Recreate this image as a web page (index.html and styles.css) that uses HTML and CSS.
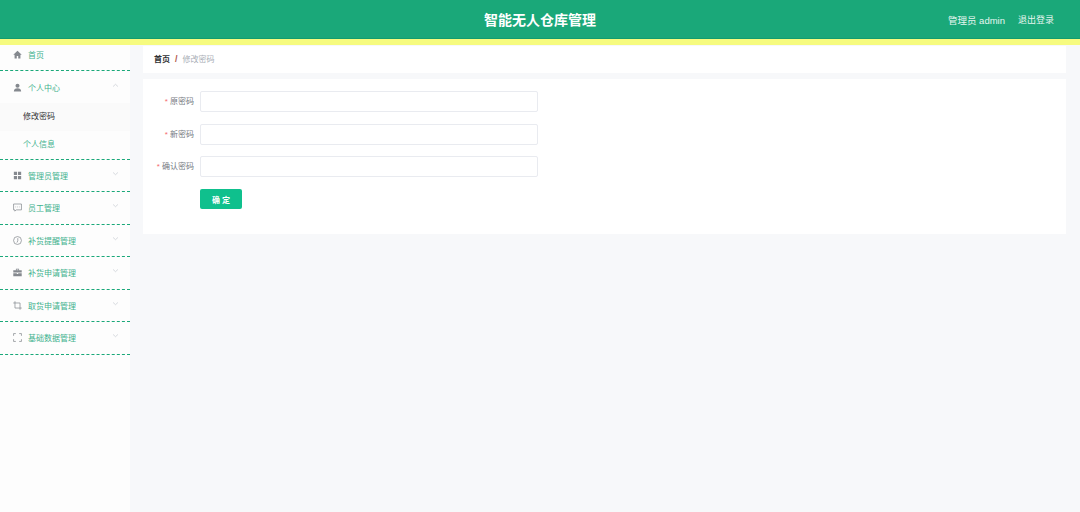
FILE: index.html
```html
<!DOCTYPE html>
<html lang="zh-CN">
<head>
    <meta charset="UTF-8">
    <meta name="viewport" content="width=device-width, initial-scale=1.0">
    <title>智能无人仓库管理</title>
    <link rel="stylesheet" href="styles.css">
</head>
<body>
    <header class="header">
        <h1>智能无人仓库管理</h1>
        <div class="header-right">
            <span>管理员 admin</span>
            <a href="#">退出登录</a>
        </div>
    </header>

    <div class="layout">
        <aside class="sidebar">
            <a href="#" class="menu-item menu-home">
                <svg class="menu-icon" viewBox="0 0 16 16"><path d="M8 1.500 0.500 8.500h2.300V15h3.900v-4.200h2.600V15h3.900V8.500h2.300z"/></svg>
                <span>首页</span>
            </a>

            <div class="menu-group">
                <a href="#" class="menu-item">
                    <svg class="menu-icon" viewBox="0 0 16 16"><circle cx="8" cy="4.800" r="3.600"/><path d="M1.500 15c0-3.800 2.600-5.500 6.500-5.500s6.500 1.700 6.500 5.500z"/></svg>
                    <span>个人中心</span>
                    <svg class="menu-arrow" viewBox="0 0 10 10"><path d="M1.500 6.500 5 3.300l3.500 3.200"/></svg>
                </a>
                <a href="#" class="submenu-item active">修改密码</a>
                <a href="#" class="submenu-item">个人信息</a>
            </div>

            <a href="#" class="menu-item">
                <svg class="menu-icon" viewBox="0 0 16 16"><path d="M1.500 1.500h5.700v5.700H1.500zM8.800 1.500h5.700v5.700H8.800zM1.500 8.800h5.700v5.700H1.500zM8.800 8.800h5.700v5.700H8.800z"/></svg>
                <span>管理员管理</span>
                <svg class="menu-arrow" viewBox="0 0 10 10"><path d="M1.500 3.500 5 6.700l3.500-3.200"/></svg>
            </a>
            <a href="#" class="menu-item">
                <svg class="menu-icon icon-line" viewBox="0 0 16 16"><path d="M1 1.800h14v10.400H6l-2.800 2.200v-2.200H1zM4.500 7h1M7.500 7h1M10.500 7h1"/></svg>
                <span>员工管理</span>
                <svg class="menu-arrow" viewBox="0 0 10 10"><path d="M1.500 3.500 5 6.700l3.500-3.200"/></svg>
            </a>
            <a href="#" class="menu-item">
                <svg class="menu-icon icon-line" viewBox="0 0 16 16"><circle cx="8" cy="8" r="7"/><path d="M8.500 3.800v4.700l-1.500 3.200"/></svg>
                <span>补货提醒管理</span>
                <svg class="menu-arrow" viewBox="0 0 10 10"><path d="M1.500 3.500 5 6.700l3.500-3.200"/></svg>
            </a>
            <a href="#" class="menu-item">
                <svg class="menu-icon" viewBox="0 0 16 16"><path d="M5.200 1.500h5.600v2.700H15.500v4H.5v-4h4.700zm1.200 1.200v1.500h3.200V2.700zM.5 9.200h6.300v1.500h2.400V9.200h6.300v5.300H.5z"/></svg>
                <span>补货申请管理</span>
                <svg class="menu-arrow" viewBox="0 0 10 10"><path d="M1.500 3.500 5 6.700l3.500-3.200"/></svg>
            </a>
            <a href="#" class="menu-item">
                <svg class="menu-icon icon-line" viewBox="0 0 16 16"><path d="M3.500.5v12h12M.5 3.500h12v12"/></svg>
                <span>取货申请管理</span>
                <svg class="menu-arrow" viewBox="0 0 10 10"><path d="M1.500 3.500 5 6.700l3.500-3.200"/></svg>
            </a>
            <a href="#" class="menu-item">
                <svg class="menu-icon icon-line" viewBox="0 0 16 16"><path d="M1 5V1h4M11 1h4v4M15 11v4h-4M5 15H1v-4"/></svg>
                <span>基础数据管理</span>
                <svg class="menu-arrow" viewBox="0 0 10 10"><path d="M1.500 3.500 5 6.700l3.500-3.200"/></svg>
            </a>
        </aside>

        <main class="main-content">
            <div class="breadcrumb">
                <strong>首页</strong>
                <span class="breadcrumb-sep">/</span>
                <span class="breadcrumb-current">修改密码</span>
            </div>

            <form class="form-card">
                <div class="form-row">
                    <label><i>*</i> 原密码</label>
                    <input type="password" class="form-input">
                </div>
                <div class="form-row">
                    <label><i>*</i> 新密码</label>
                    <input type="password" class="form-input">
                </div>
                <div class="form-row">
                    <label><i>*</i> 确认密码</label>
                    <input type="password" class="form-input">
                </div>
                <div class="form-row">
                    <label></label>
                    <button type="button" class="btn-primary">确 定</button>
                </div>
            </form>
        </main>
    </div>
</body>
</html>
```

FILE: styles.css
```css
* {
    margin: 0;
    padding: 0;
    box-sizing: border-box;
}

body {
    font-family: "Liberation Sans", "Noto Sans CJK SC", sans-serif;
    background: #f7f8fa;
    color: #606266;
    display: flex;
    flex-direction: column;
    height: 512px;
    overflow: hidden;
}

a {
    text-decoration: none;
    color: inherit;
}

.header {
    height: 45px;
    flex: none;
    background: #1aa879;
    border-bottom: 6px solid #f6fb7f;
    box-shadow: inset 0 -1px 0 #129c6f;
    display: flex;
    align-items: center;
    justify-content: center;
    position: relative;
    color: #fff;
}

.header h1 {
    font-size: 14px;
    font-weight: 700;
    line-height: 40px;
}

.header-right {
    position: absolute;
    top: 0;
    right: 26px;
    height: 39px;
    display: flex;
    align-items: center;
    gap: 13px;
    font-size: 9.500px;
    color: #e6f6f0;
}

.header-right a {
    font-size: 9px;
}

.layout {
    flex: 1;
    display: flex;
    min-height: 0;
}

.sidebar {
    width: 130px;
    flex: none;
    background: #fdfdfd;
    font-size: 8px;
    color: #3fb28d;
}

.menu-item {
    display: flex;
    align-items: center;
    height: 32.500px;
    padding: 0 11px 0 13px;
    border-bottom: 1px dashed #1aa879;
}

.menu-home {
    height: 26px;
    padding-bottom: 7px;
}

.menu-group .menu-item {
    border-bottom: none;
}

.menu-group {
    height: 88.500px;
    border-bottom: 1px dashed #1aa879;
}

.menu-icon {
    width: 9px;
    height: 9px;
    margin-right: 6px;
    flex: none;
    fill: #85898f;
}

.icon-line {
    fill: none;
    stroke: #85898f;
    stroke-width: 1.300;
}

.menu-arrow {
    width: 7px;
    height: 7px;
    margin-left: auto;
    margin-bottom: 4px;
    fill: none;
    stroke: #c0c4cc;
    stroke-width: 0.900;
}

.submenu-item {
    display: flex;
    align-items: center;
    height: 28px;
    padding: 0 0 2px 23px;
    margin-top: -1px;
}

.submenu-item + .submenu-item {
    margin-top: 0;
}

.submenu-item.active {
    background: #fafafa;
    color: #303133;
}

.main-content {
    flex: 1;
    padding: 1px 14px 0 13px;
    min-width: 0;
}

.breadcrumb {
    height: 27px;
    background: #fff;
    display: flex;
    align-items: center;
    padding: 0 0 2px 11px;
    font-size: 8px;
    color: #a9aeb6;
}

.breadcrumb strong {
    color: #303133;
    font-weight: 700;
}

.breadcrumb-sep {
    margin: 0 5px;
    color: #b0574a;
    font-size: 9px;
    font-weight: 700;
}

.form-card {
    margin-top: 6px;
    background: #fff;
    height: 155px;
    padding-top: 12px;
}

.form-row {
    display: flex;
    align-items: center;
    height: 21px;
    margin-bottom: 11.500px;
}

.form-row label {
    width: 51px;
    margin-right: 6px;
    padding-bottom: 2px;
    text-align: right;
    font-size: 8px;
    color: #757a82;
    flex: none;
}

.form-row label i {
    color: #f56c6c;
    font-style: normal;
}

.form-input {
    width: 338px;
    height: 21px;
    border: 1px solid #e9ebf0;
    border-radius: 2px;
    background: #fff;
}

.btn-primary {
    width: 42px;
    height: 20px;
    border: none;
    border-radius: 2px;
    background: #0fc08d;
    color: #fff;
    font-family: inherit;
    font-size: 8px;
    font-weight: 700;
}
```
